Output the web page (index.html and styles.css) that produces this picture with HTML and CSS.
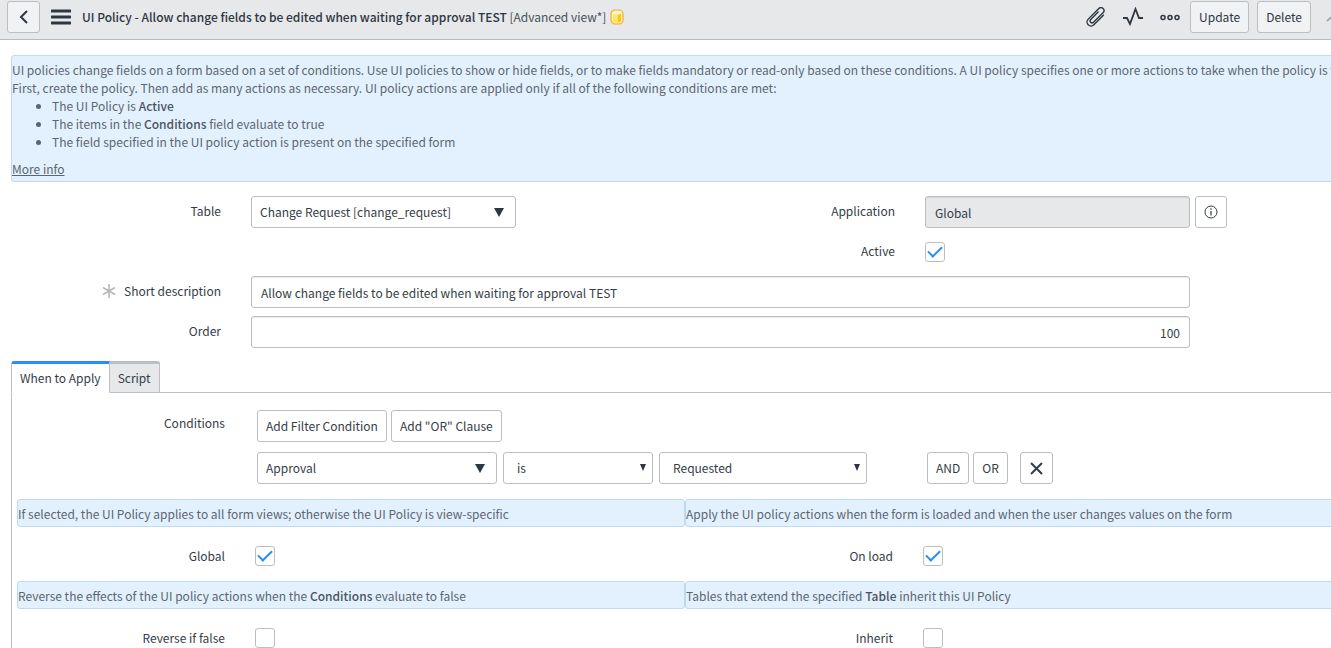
FILE: index.html
```html
<!DOCTYPE html>
<html lang="en">
<head>
  <meta charset="UTF-8" />
  <meta name="viewport" content="width=device-width, initial-scale=1.0"/>
  <title>UI Policy - Allow change fields to be edited when waiting for approval TEST</title>
  <link rel="stylesheet" href="styles.css">
</head>
<body>
  <div class="page">
    <header class="header">
      <button class="btn btn-back" type="button" aria-label="Back">
        <svg width="10" height="14" viewBox="0 0 10 14"><path d="M8 1L2 7l6 6" fill="none" stroke="currentColor" stroke-width="2"/></svg>
      </button>
      <button class="icon-btn menu-btn" type="button" aria-label="Form menu">
        <svg width="20" height="16" viewBox="0 0 20 16"><path d="M1 2h18M1 8h18M1 14h18" fill="none" stroke="currentColor" stroke-width="3" stroke-linecap="round"/></svg>
      </button>
      <h1 class="title">UI Policy - Allow change fields to be edited when waiting for approval TEST <span class="view">[Advanced view*]</span></h1>
      <svg class="gold" width="14" height="16" viewBox="0 0 14 16">
        <rect x="1" y="1" width="12" height="14" rx="4" fill="#fff3b0" stroke="#f3a93c" stroke-width="1.2"/>
        <path d="M3 4v8c0 2.500 8 2.500 8 0V4z" fill="#ffe766"/>
        <path d="M8 5v8.500c2 0 3-.8 3-1.500V4z" fill="#fcc419"/>
        <ellipse cx="7" cy="4" rx="4" ry="1.600" fill="#fff8c8"/>
      </svg>
      <div class="header-actions">
        <button class="icon-btn" type="button" aria-label="Attachments">
          <svg width="20" height="20" viewBox="0 0 20 20"><g transform="rotate(45 10 10)" fill="none" stroke="currentColor" stroke-width="1.400" stroke-linecap="round"><path d="M14 3.500V17a4 4 0 0 1-8 0V2a3 3 0 0 1 6 0v13.500a2 2 0 0 1-4 0V5"/></g></svg>
        </button>
        <button class="icon-btn" type="button" aria-label="Activity">
          <svg width="20" height="20" viewBox="0 0 20 20"><path d="M0 11h4l3 6 5.500-15 3.500 9h4" fill="none" stroke="currentColor" stroke-width="1.800"/></svg>
        </button>
        <button class="icon-btn" type="button" aria-label="More options">
          <svg width="20" height="20" viewBox="0 0 20 20"><g fill="none" stroke="currentColor" stroke-width="1.500"><circle cx="3" cy="10.500" r="2"/><circle cx="10" cy="10.500" r="2"/><circle cx="17" cy="10.500" r="2"/></g></svg>
        </button>
        <button class="btn" type="button">Update</button>
        <button class="btn" type="button">Delete</button>
        <button class="icon-btn nav-up" type="button" aria-label="Previous record">
          <svg width="18" height="10" viewBox="0 0 18 10"><path d="M1 9l8-7 8 7" fill="none" stroke="currentColor" stroke-width="2"/></svg>
        </button>
      </div>
    </header>

    <main class="content">
      <div class="hint intro">
        <p>UI policies change fields on a form based on a set of conditions. Use UI policies to show or hide fields, or to make fields mandatory or read-only based on these conditions. A UI policy specifies one or more actions to take when the policy is triggered.</p>
        <p>First, create the policy. Then add as many actions as necessary. UI policy actions are applied only if all of the following conditions are met:</p>
        <ul>
          <li>The UI Policy is <b>Active</b></li>
          <li>The items in the <b>Conditions</b> field evaluate to true</li>
          <li>The field specified in the UI policy action is present on the specified form</li>
        </ul>
        <a class="more" href="#">More info</a>
      </div>

      <form class="form">
        <div class="row">
          <label for="table">Table</label>
          <div class="select">
            <select id="table"><option>Change Request [change_request]</option></select>
            <svg class="arrow" width="10" height="9" viewBox="0 0 10 9"><path d="M0 0h10L5 9z" fill="currentColor"/></svg>
          </div>
        </div>
        <div class="row">
          <label for="application">Application</label>
          <div class="with-info">
            <input class="text" id="application" type="text" value="Global" readonly>
            <button class="btn btn-info" type="button" aria-label="Application info">
              <svg width="14" height="14" viewBox="0 0 14 14"><circle cx="7" cy="7" r="6" fill="none" stroke="currentColor"/><path d="M7 6v4.500M7 3.300v1.400" stroke="currentColor" stroke-width="1.200"/></svg>
            </button>
          </div>
        </div>
        <div class="row right-col">
          <label for="active">Active</label>
          <input class="check" id="active" type="checkbox" checked>
        </div>
        <div class="row wide">
          <label for="short-description">
            <svg class="required" width="14" height="14" viewBox="0 0 14 14"><path d="M7 0v14M1 3.500l12 7M13 3.500l-12 7" stroke="currentColor" stroke-width="1.600"/></svg>
            Short description
          </label>
          <input class="text" id="short-description" type="text" value="Allow change fields to be edited when waiting for approval TEST">
        </div>
        <div class="row wide">
          <label for="order">Order</label>
          <input class="text number" id="order" type="text" value="100">
        </div>
      </form>

      <div class="tabs">
        <button class="tab active" type="button">When to Apply</button>
        <button class="tab" type="button">Script</button>
      </div>

      <section class="panel">
        <div class="conditions">
          <span class="conditions-label">Conditions</span>
          <div class="builder">
            <div class="builder-row">
              <button class="btn white" type="button">Add Filter Condition</button>
              <button class="btn white" type="button">Add "OR" Clause</button>
            </div>
            <div class="builder-row filter">
              <div class="select field">
                <select aria-label="Field"><option>Approval</option></select>
                <svg class="arrow" width="10" height="9" viewBox="0 0 10 9"><path d="M0 0h10L5 9z" fill="currentColor"/></svg>
              </div>
              <div class="select small operator">
                <select aria-label="Operator"><option>is</option></select>
                <svg class="arrow" width="6" height="7" viewBox="0 0 6 7"><path d="M0 0h6L3 7z" fill="currentColor"/></svg>
              </div>
              <div class="select small value">
                <select aria-label="Value"><option>Requested</option></select>
                <svg class="arrow" width="6" height="7" viewBox="0 0 6 7"><path d="M0 0h6L3 7z" fill="currentColor"/></svg>
              </div>
              <div class="filter-actions">
                <button class="btn white" type="button">AND</button>
                <button class="btn white" type="button">OR</button>
                <button class="btn white remove" type="button" aria-label="Remove condition">
                  <svg width="13" height="13" viewBox="0 0 13 13"><path d="M1 1l11 11M12 1L1 12" stroke="currentColor" stroke-width="2"/></svg>
                </button>
              </div>
            </div>
          </div>
        </div>

        <div class="options">
          <div class="option">
            <div class="hint">If selected, the UI Policy applies to all form views; otherwise the UI Policy is view-specific</div>
            <div class="row">
              <label for="global">Global</label>
              <input class="check" id="global" type="checkbox" checked>
            </div>
          </div>
          <div class="option">
            <div class="hint">Apply the UI policy actions when the form is loaded and when the user changes values on the form</div>
            <div class="row">
              <label for="on-load">On load</label>
              <input class="check" id="on-load" type="checkbox" checked>
            </div>
          </div>
          <div class="option">
            <div class="hint">Reverse the effects of the UI policy actions when the <b>Conditions</b> evaluate to false</div>
            <div class="row">
              <label for="reverse">Reverse if false</label>
              <input class="check" id="reverse" type="checkbox">
            </div>
          </div>
          <div class="option">
            <div class="hint">Tables that extend the specified <b>Table</b> inherit this UI Policy</div>
            <div class="row">
              <label for="inherit">Inherit</label>
              <input class="check" id="inherit" type="checkbox">
            </div>
          </div>
        </div>
      </section>
    </main>
  </div>
</body>
</html>
```
FILE: styles.css
```css
* { margin: 0; padding: 0; box-sizing: border-box; }
html { overflow: hidden; }
body {
  font-family: "Source Sans Pro", "Noto Sans CJK SC", sans-serif;
  font-size: 12px;
  line-height: 18px;
  color: #343d47;
  background: #fff;
}
button, input, select { font: inherit; color: inherit; }
svg { display: block; flex: none; }
b { font-weight: 500; color: #4b545c; }
/* the form is a little wider than the window and runs off to the right */
.page { margin-right: -28px; }

.header {
  display: flex;
  align-items: center;
  height: 40px;
  padding: 0 15px 6px 7px;
  background: #e6e8ea;
  border-bottom: 1px solid #b9bcbf;
  color: #2e3642;
}
.btn {
  display: flex;
  align-items: center;
  justify-content: center;
  height: 32px;
  padding: 0 8px;
  background: #f1f2f4;
  border: 1px solid #bcbfc2;
  border-radius: 3px;
  white-space: nowrap;
}
.btn.white, .btn-info { background: #fff; }
.btn-back { width: 33px; }
.icon-btn { background: none; border: none; }
.menu-btn { margin: 0 11px; }
.title { font-size: 12px; font-weight: 500; white-space: nowrap; }
.view { font-weight: 400; color: #485058; }
.gold { margin-left: 4px; }
.header-actions {
  display: flex;
  align-items: center;
  gap: 8px;
  margin-left: auto;
}
.header-actions .icon-btn { margin-right: 9px; }
.header-actions .icon-btn:nth-child(3) { margin-right: 2px; }
.header-actions .nav-up { margin: 0 0 0 7px; color: #a4a9ae; }

.content { padding: 15px 0 0 11px; }
.hint {
  height: 28px;
  padding: 5px 0 3px;
  background: #e3f1ff;
  border: 1px solid #bfdaf0;
  border-radius: 3px;
  color: #5d666e;
  white-space: nowrap;
}
.intro { height: auto; }
.intro ul { padding-left: 40px; margin-bottom: 9px; }
.more { display: block; width: max-content; color: inherit; }

.form {
  display: grid;
  grid-template-columns: 1fr 1fr;
  row-gap: 8px;
  padding-top: 14px;
}
.row {
  display: grid;
  grid-template-columns: 210px 1fr;
  column-gap: 30px;
  align-items: center;
  height: 32px;
  padding-right: 169px;
}
.row label {
  display: flex;
  justify-content: flex-end;
  align-items: center;
  gap: 8px;
}
.form label { padding-bottom: 2px; }
.right-col { grid-column: 2; }
.wide { grid-column: 1 / -1; }
.required { color: #b4b8bc; }
.text, select {
  width: 100%;
  height: 32px;
  padding: 0 9px;
  background: #fff;
  border: 1px solid #bcbfc2;
  border-radius: 3px;
}
.text { box-shadow: inset 0 1px 1px rgba(0, 0, 0, 0.08); }
.text[readonly] { background: #e6e8ea; }
.number { text-align: right; }
.with-info { display: flex; gap: 5px; margin-right: -37px; }
.btn-info { width: 32px; flex: none; }
.select { position: relative; }
select { appearance: none; padding: 0 8px; }
.arrow {
  position: absolute;
  right: 12px;
  top: 12px;
  color: #2e3642;
  pointer-events: none;
}
.small select { padding: 0 13px; }
.small .arrow { right: 7px; }
.check {
  appearance: none;
  display: grid;
  place-items: center;
  width: 20px;
  height: 20px;
  background: #fff;
  border: 1px solid #bcbfc2;
  border-radius: 3px;
}
.check:checked::before {
  content: "";
  width: 12px;
  height: 6px;
  margin-bottom: 4px;
  border: solid #278efc;
  border-width: 0 0 2px 2px;
  transform: rotate(-45deg);
}

.tabs {
  display: flex;
  margin-top: 13px;
}
.tab {
  height: 32px;
  padding: 0 8px;
  background: #e6e8ea;
  border: 1px solid #bcbfc2;
  border-top-width: 3px;
  border-left: none;
  border-radius: 0 3px 0 0;
}
.tab.active {
  background: #fff;
  border-left: 1px solid #bcbfc2;
  border-top-color: #278efc;
  border-bottom-color: #fff;
  border-radius: 3px 0 0 0;
}
.panel {
  margin-top: -1px;
  padding: 17px 6px 0 5px;
  border-top: 1px solid #bcbfc2;
  border-left: 1px solid #bcbfc2;
}
/* keeps the active tab's bottom edge over the panel line */
.tabs .active { position: relative; z-index: 1; }
.conditions {
  display: grid;
  grid-template-columns: 208px 1fr;
  column-gap: 32px;
}
.conditions-label { padding-top: 4px; text-align: right; }
.builder { display: grid; gap: 10px; }
.builder-row { display: flex; gap: 4px; }
.filter { gap: 6px; }
.field { width: 240px; }
.operator { width: 150px; }
.value { width: 208px; }
.filter-actions { display: flex; gap: 4px; margin-left: 54px; }
.remove { width: 33px; margin-left: 8px; }

.options {
  display: grid;
  grid-template-columns: 1fr 1fr;
  row-gap: 9px;
  margin-top: 15px;
}
.options .row { grid-template-columns: 208px 1fr; margin-top: 13px; }
```
